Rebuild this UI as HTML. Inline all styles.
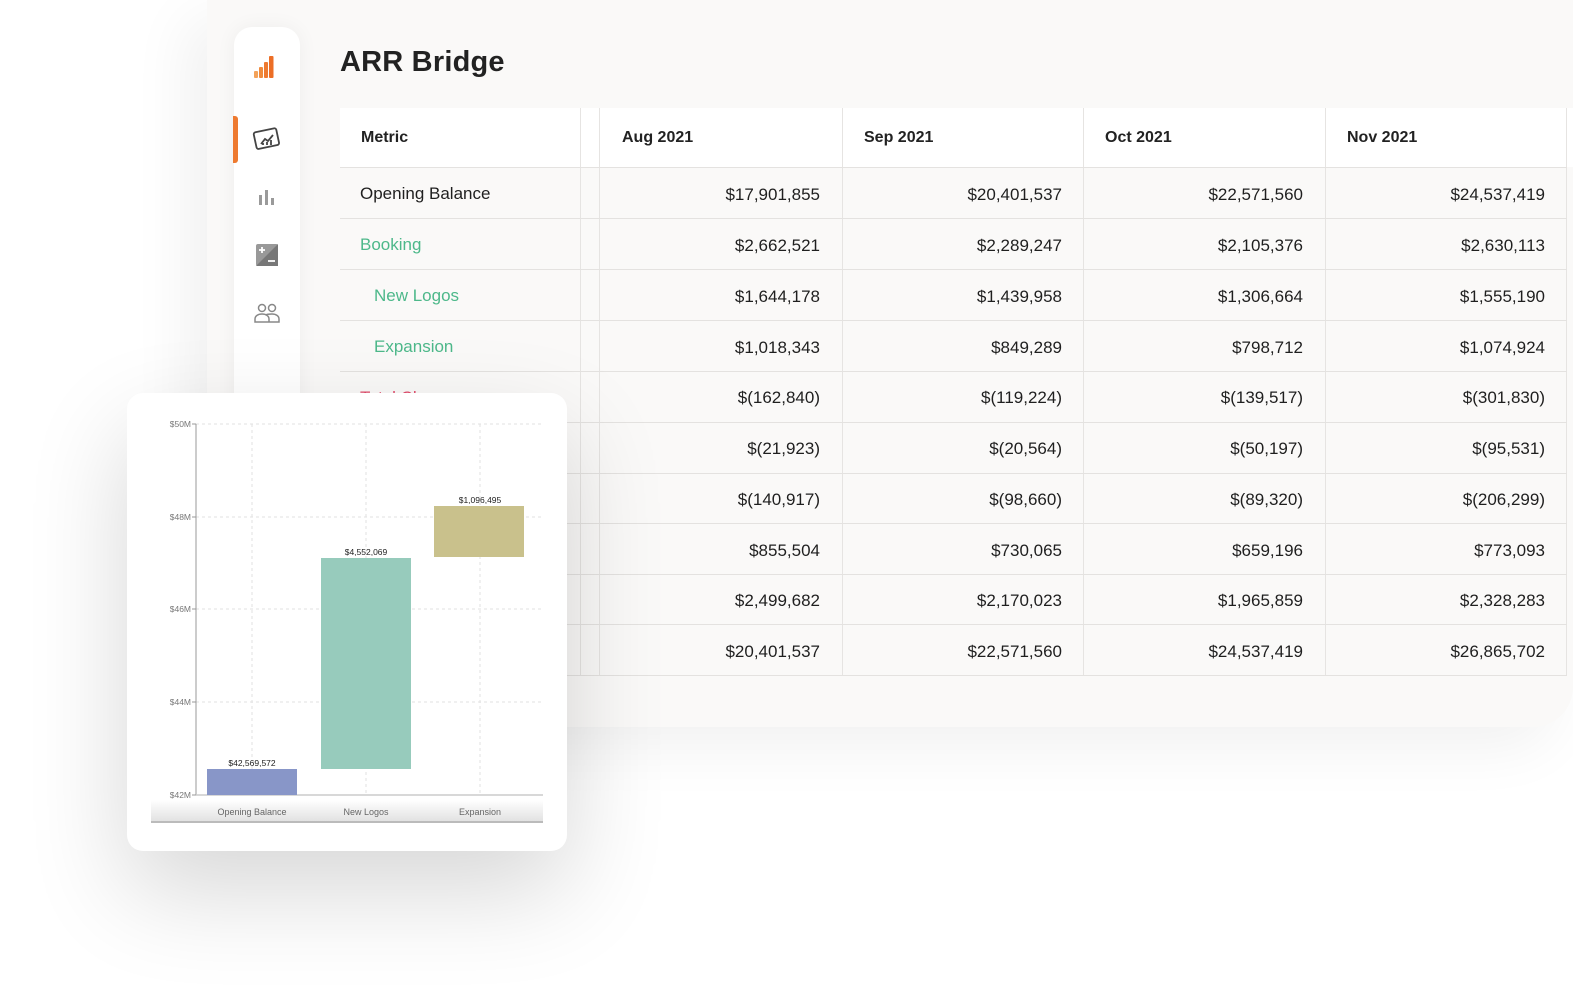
<!DOCTYPE html>
<html><head><meta charset="utf-8"><style>
*{margin:0;padding:0;box-sizing:border-box}
body{width:1573px;height:1004px;background:#fff;position:relative;overflow:hidden;font-family:"Liberation Sans","DejaVu Sans",sans-serif;color:#1f1f1f}
.panel{position:absolute;left:207px;top:0;width:1366px;height:727px;background:#faf9f8;border-radius:0 0 40px 20px;box-shadow:-20px 20px 60px rgba(0,0,0,0.06)}
.side{position:absolute;left:234px;top:27px;width:66px;height:420px;background:#fff;border-radius:18px 18px 0 0;box-shadow:0 0 20px rgba(0,0,0,0.05)}
.active{position:absolute;left:233px;top:116px;width:5px;height:47px;background:#ee7a30;border-radius:0 3px 3px 0}
h1{position:absolute;left:340px;top:46px;font-size:29px;font-weight:bold;color:#222;letter-spacing:0.2px}
.hdr{position:absolute;left:340px;top:108px;width:1233px;height:59px;background:#fff}
.vl{position:absolute;top:108px;height:567px;width:1px;background:#e6e4e2}
.hl{position:absolute;left:340px;width:1227px;height:1px;background:#e4e2e0}
.t{position:absolute;font-size:17px;white-space:nowrap}
.th{font-weight:bold;font-size:16px;color:#222}
.r{text-align:right;width:200px}
.g{color:#4db88a}
.card{position:absolute;left:127px;top:393px;width:440px;height:458px;background:#fff;border-radius:16px;box-shadow:0 40px 100px rgba(0,0,0,0.16)}
</style></head><body>
<div class="panel"></div>
<div class="side"></div>
<div class="active"></div>
<svg style="position:absolute;left:252px;top:54px" width="26" height="26" viewBox="0 0 26 26">
<rect x="2" y="17" width="4" height="7" rx="1" fill="#f3a25a"/><rect x="7" y="13" width="4" height="11" rx="1" fill="#f08a3c"/><rect x="12" y="8" width="4" height="16" rx="1" fill="#ee7a30"/><rect x="17" y="2" width="4.5" height="22" rx="1" fill="#ec6e26"/>
</svg>
<svg style="position:absolute;left:252px;top:125px" width="30" height="28" viewBox="0 0 30 28" fill="none" stroke="#444" stroke-width="1.8">
<rect x="3" y="5" width="23" height="17" rx="2" transform="rotate(-12 15 14)"/><path d="M9 19l4-5 3 2 5-6"/><path d="M11 20v-2M15 20v-3M19 20v-5"/>
</svg>
<svg style="position:absolute;left:258px;top:188px" width="18" height="18" viewBox="0 0 18 18" fill="#9a9a9a"><rect x="1" y="7" width="3" height="10"/><rect x="7" y="2" width="3" height="15"/><rect x="13" y="10" width="3" height="7"/></svg>
<svg style="position:absolute;left:256px;top:244px" width="22" height="22" viewBox="0 0 22 22"><rect x="0" y="0" width="22" height="22" rx="2" fill="#999"/><path d="M0 22L22 0V22Z" fill="#777"/><path d="M3 6h6M6 3v6M12 17h7" stroke="#fff" stroke-width="1.8"/></svg>
<svg style="position:absolute;left:253px;top:303px" width="28" height="20" viewBox="0 0 28 20" fill="none" stroke="#888" stroke-width="1.5"><circle cx="9" cy="5" r="3.5"/><circle cx="19" cy="5" r="3.5"/><path d="M2 19v-3c0-3 3-5 7-5s7 2 7 5v3zM13 12c1-1 3-1 6-1 4 0 7 2 7 5v3h-10"/></svg>

<h1>ARR Bridge</h1>
<div class="hdr"></div>
<div class="vl" style="left:580px"></div><div class="vl" style="left:599px"></div><div class="vl" style="left:842px"></div><div class="vl" style="left:1083px"></div><div class="vl" style="left:1325px"></div><div class="vl" style="left:1566px"></div>
<div class="hl" style="top:167px"></div><div class="hl" style="top:218px"></div><div class="hl" style="top:269px"></div><div class="hl" style="top:320px"></div><div class="hl" style="top:371px"></div><div class="hl" style="top:422px"></div><div class="hl" style="top:473px"></div><div class="hl" style="top:523px"></div><div class="hl" style="top:574px"></div><div class="hl" style="top:624px"></div><div class="hl" style="top:675px"></div>
<div class="t th" style="left:361px;top:129px">Metric</div>
<div class="t th" style="left:622px;top:129px">Aug 2021</div>
<div class="t th" style="left:864px;top:129px">Sep 2021</div>
<div class="t th" style="left:1105px;top:129px">Oct 2021</div>
<div class="t th" style="left:1347px;top:129px">Nov 2021</div>
<div class="t" style="left:360px;top:184px">Opening Balance</div>
<div class="t g" style="left:360px;top:235px">Booking</div>
<div class="t g" style="left:374px;top:286px">New Logos</div>
<div class="t g" style="left:374px;top:337px">Expansion</div>
<div class="t" style="left:360px;top:388px;color:#e04a6a">Total Churn</div>

<div class="t r" style="left:620px;top:185px">$17,901,855</div><div class="t r" style="left:862px;top:185px">$20,401,537</div><div class="t r" style="left:1103px;top:185px">$22,571,560</div><div class="t r" style="left:1345px;top:185px">$24,537,419</div>
<div class="t r" style="left:620px;top:236px">$2,662,521</div><div class="t r" style="left:862px;top:236px">$2,289,247</div><div class="t r" style="left:1103px;top:236px">$2,105,376</div><div class="t r" style="left:1345px;top:236px">$2,630,113</div>
<div class="t r" style="left:620px;top:287px">$1,644,178</div><div class="t r" style="left:862px;top:287px">$1,439,958</div><div class="t r" style="left:1103px;top:287px">$1,306,664</div><div class="t r" style="left:1345px;top:287px">$1,555,190</div>
<div class="t r" style="left:620px;top:338px">$1,018,343</div><div class="t r" style="left:862px;top:338px">$849,289</div><div class="t r" style="left:1103px;top:338px">$798,712</div><div class="t r" style="left:1345px;top:338px">$1,074,924</div>
<div class="t r" style="left:620px;top:388px">$(162,840)</div><div class="t r" style="left:862px;top:388px">$(119,224)</div><div class="t r" style="left:1103px;top:388px">$(139,517)</div><div class="t r" style="left:1345px;top:388px">$(301,830)</div>
<div class="t r" style="left:620px;top:439px">$(21,923)</div><div class="t r" style="left:862px;top:439px">$(20,564)</div><div class="t r" style="left:1103px;top:439px">$(50,197)</div><div class="t r" style="left:1345px;top:439px">$(95,531)</div>
<div class="t r" style="left:620px;top:490px">$(140,917)</div><div class="t r" style="left:862px;top:490px">$(98,660)</div><div class="t r" style="left:1103px;top:490px">$(89,320)</div><div class="t r" style="left:1345px;top:490px">$(206,299)</div>
<div class="t r" style="left:620px;top:541px">$855,504</div><div class="t r" style="left:862px;top:541px">$730,065</div><div class="t r" style="left:1103px;top:541px">$659,196</div><div class="t r" style="left:1345px;top:541px">$773,093</div>
<div class="t r" style="left:620px;top:591px">$2,499,682</div><div class="t r" style="left:862px;top:591px">$2,170,023</div><div class="t r" style="left:1103px;top:591px">$1,965,859</div><div class="t r" style="left:1345px;top:591px">$2,328,283</div>
<div class="t r" style="left:620px;top:642px">$20,401,537</div><div class="t r" style="left:862px;top:642px">$22,571,560</div><div class="t r" style="left:1103px;top:642px">$24,537,419</div><div class="t r" style="left:1345px;top:642px">$26,865,702</div>

<div class="card"></div>
<svg style="position:absolute;left:127px;top:393px" width="440" height="458" viewBox="127 393 440 458" font-family="Liberation Sans, sans-serif">
<defs><linearGradient id="bg" x1="0" y1="0" x2="0" y2="1"><stop offset="0" stop-color="#fff"/><stop offset="1" stop-color="#e2e2e2"/></linearGradient></defs>
<rect x="151" y="800" width="392" height="21" fill="url(#bg)"/>
<line x1="151" y1="822" x2="543" y2="822" stroke="#bbb" stroke-width="2"/>
<g stroke="#e2e2e2" stroke-dasharray="3,3" stroke-width="1">
<line x1="196" y1="424" x2="543" y2="424"/><line x1="196" y1="517" x2="543" y2="517"/><line x1="196" y1="609" x2="543" y2="609"/><line x1="196" y1="702" x2="543" y2="702"/>
<line x1="252" y1="424" x2="252" y2="795"/><line x1="366" y1="424" x2="366" y2="795"/><line x1="480" y1="424" x2="480" y2="795"/>
</g>
<line x1="196" y1="424" x2="196" y2="795" stroke="#999"/>
<line x1="196" y1="795" x2="543" y2="795" stroke="#ccc" stroke-width="1.5"/>
<g stroke="#999"><line x1="192" y1="424" x2="196" y2="424"/><line x1="192" y1="517" x2="196" y2="517"/><line x1="192" y1="609" x2="196" y2="609"/><line x1="192" y1="702" x2="196" y2="702"/><line x1="192" y1="795" x2="196" y2="795"/></g>
<g font-size="8.5" fill="#777" text-anchor="end"><text x="191" y="427">$50M</text><text x="191" y="520">$48M</text><text x="191" y="612">$46M</text><text x="191" y="705">$44M</text><text x="191" y="798">$42M</text></g>
<rect x="207" y="769" width="90" height="26" fill="#8896c8"/>
<rect x="321" y="558" width="90" height="211" fill="#97cbbc"/>
<rect x="434" y="506" width="90" height="51" fill="#c9c18c"/>
<g font-size="8.5" fill="#222" text-anchor="middle"><text x="252" y="766">$42,569,572</text><text x="366" y="555">$4,552,069</text><text x="480" y="503">$1,096,495</text></g>
<g font-size="9" fill="#666" text-anchor="middle"><text x="252" y="815">Opening Balance</text><text x="366" y="815">New Logos</text><text x="480" y="815">Expansion</text></g>
</svg>
</body></html>
